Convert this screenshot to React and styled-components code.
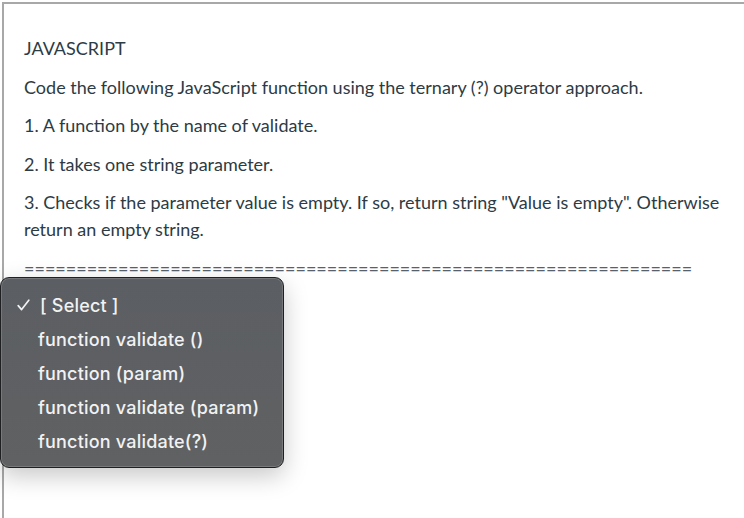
import React from 'react'
import styled, { createGlobalStyle } from 'styled-components'

const GlobalStyle = createGlobalStyle`
    body {
        margin: 0;
        background: #ffffff;
        overflow: hidden;
    }
`

const Page = styled.div`
    position: relative;
    margin: 2px 0 0 2px;
    height: 516px;
    box-sizing: border-box;
    border-top: 2px solid #a8a8a8;
    border-left: 2px solid #a8a8a8;
    padding: 31px 12px 0 20px;
    font-family: Lato, "Open Sans", sans-serif;
    font-size: 18px;
    line-height: 27px;
    color: #2d3b45;
`

const Para = styled.p`
    margin: 0 0 11.5px;
`

const Rule = styled.p`
    margin: 0;
    color: #56616b;
    white-space: nowrap;
`

const Menu = styled.ul`
    position: absolute;
    top: 273px;
    left: -4px;
    width: 284px;
    margin: 0;
    padding: 10px 0 9px;
    list-style: none;
    box-sizing: border-box;
    border: 1px solid #1f2022;
    border-radius: 9px;
    background: linear-gradient(#5b5e63, #606162);
    box-shadow: inset 0 0 0 1px rgba(255, 255, 255, 0.16), 0 8px 24px rgba(0, 0, 0, 0.22);
    font-family: Inter, "Liberation Sans", sans-serif;
    font-size: 18px;
    font-weight: 500;
    letter-spacing: 0.2px;
    color: #f2f2f2;
`

const Item = styled.li`
    display: flex;
    align-items: center;
    height: 34px;
    padding-left: ${p => (p.$selected ? '39px' : '37px')};
    position: relative;
`

const Check = styled.svg`
    position: absolute;
    left: 16px;
    top: 11px;
    width: 13px;
    height: 12px;
`

const options = [
    'function validate ()',
    'function (param)',
    'function validate (param)',
    'function validate(?)',
]

export default function App() {
    return (
        <Page>
            <GlobalStyle />
            <Para>JAVASCRIPT</Para>
            <Para>Code the following JavaScript function using the ternary (?) operator approach.</Para>
            <Para>1. A function by the name of validate.</Para>
            <Para>2. It takes one string parameter.</Para>
            <Para>3. Checks if the parameter value is empty. If so, return string "Value is empty". Otherwise return an empty string.</Para>
            <Rule>{'='.repeat(64)}</Rule>
            <Menu>
                <Item $selected>
                    <Check viewBox="0 0 13 12">
                        <path d="M1.2 6.6 L4.6 10.6 L11.8 1.2" fill="none" stroke="#f2f2f2" strokeWidth="1.7" strokeLinecap="round" strokeLinejoin="round" />
                    </Check>
                    [ Select ]
                </Item>
                {options.map(o => <Item key={o}>{o}</Item>)}
            </Menu>
        </Page>
    )
}
